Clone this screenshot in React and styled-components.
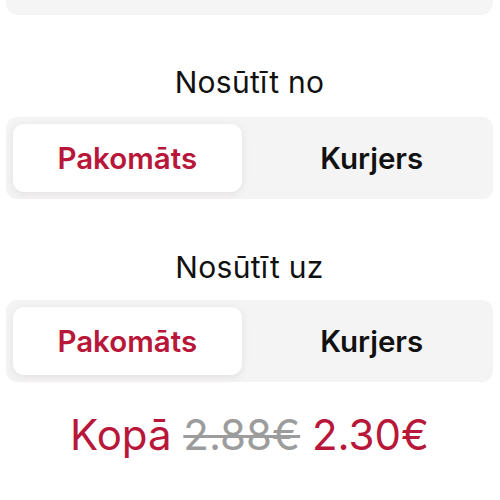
import React, { useState } from "react";
import styled, { createGlobalStyle } from "styled-components";

const GlobalStyle = createGlobalStyle`
* {
  box-sizing: border-box;
  padding: 0;
  margin: 0;
}
body {
  background: #ffffff;
  font-family: Inter, "Noto Sans", sans-serif;
  color: #111111;
}
`

const Page = styled.div`
  display: flex;
  flex-direction: column;
  padding: 0 7px 0 6px;
`

const TopCard = styled.div`
  height: 15px;
  background: #f6f5f6;
  border-radius: 0 0 12px 12px;
`

const Heading = styled.h2`
  margin-top: ${p => p.$top}px;
  font-size: 30px;
  line-height: 36px;
  font-weight: 400;
  text-align: center;
  letter-spacing: 0.3px;
`

const Segmented = styled.div`
  margin-top: ${p => p.$top}px;
  display: grid;
  grid-template-columns: 1fr 1fr;
  gap: 16px;
  padding: 7px;
  height: 82px;
  background: #f5f4f5;
  border-radius: 11px;
`

const Option = styled.button`
  border: none;
  border-radius: 11px;
  font-family: inherit;
  font-size: 29.5px;
  font-weight: 600;
  cursor: pointer;
  background: ${p => (p.$active ? "#ffffff" : "transparent")};
  color: ${p => (p.$active ? "#b8173a" : "#111111")};
  box-shadow: ${p => (p.$active ? "0 2px 8px rgba(60, 40, 50, 0.1)" : "none")};
`

const Total = styled.div`
  margin-top: 27px;
  font-size: 42px;
  line-height: 52px;
  text-align: center;
  color: #b8173a;
`

const OldPrice = styled.s`
  color: #9c9c9c;
  text-decoration-thickness: 3px;
`

const options = ["Pakomāts", "Kurjers"];

const Switch = ({ top }) => {
  const [value, setValue] = useState(options[0]);
  return (
    <Segmented $top={top}>
      {options.map(o => (
        <Option key={o} $active={o === value} onClick={() => setValue(o)}>
          {o}
        </Option>
      ))}
    </Segmented>
  );
}

const App = () => {
  return (
    <Page>
      <GlobalStyle />
      <TopCard />

      <Heading $top={49}>Nosūtīt no</Heading>
      <Switch top={17} />

      <Heading $top={50}>Nosūtīt uz</Heading>
      <Switch top={15} />

      <Total>
        Kopā <OldPrice>2.88€</OldPrice> 2.30€
      </Total>
    </Page>
  );
}

export default App;
